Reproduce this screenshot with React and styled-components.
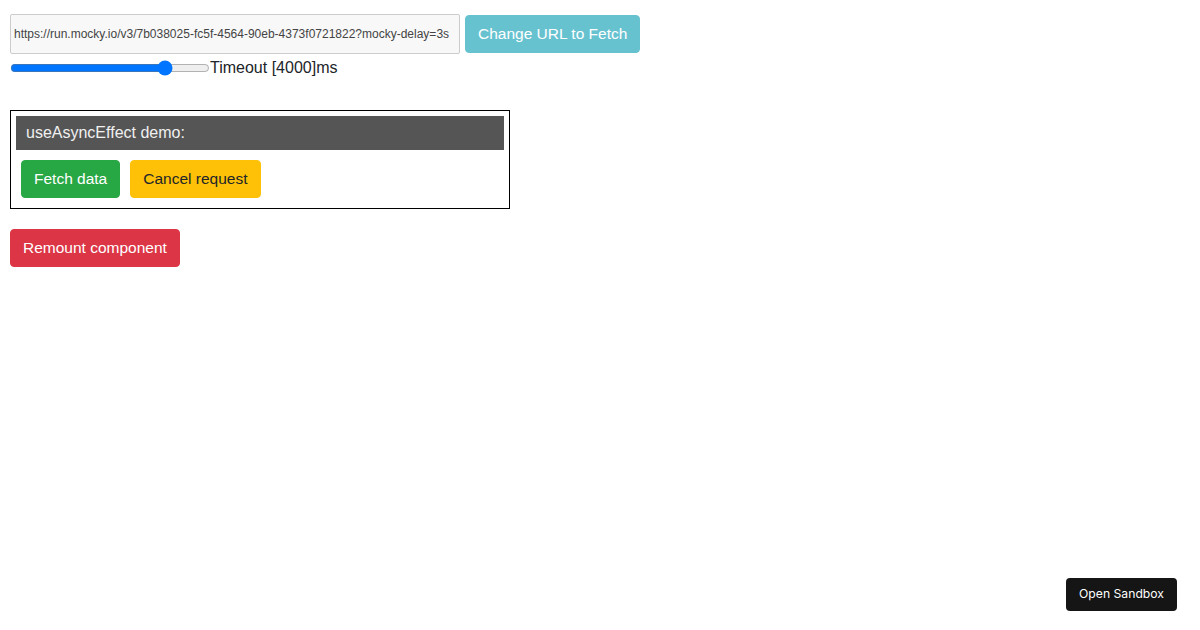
import { useState } from "react";
import styled, { createGlobalStyle } from 'styled-components'

const GlobalStyle = createGlobalStyle`
  body {
    margin: 0;
    background: #fff;
    color: #212529;
    font-family: "Liberation Sans", Arial, sans-serif;
    font-size: 16px;
    line-height: 1.5;
  }
`

const Page = styled.div`
  padding: 14px 10px;
`

const UrlRow = styled.div`
  display: flex;
  align-items: center;
  gap: 5px;
`

const UrlInput = styled.input`
  box-sizing: border-box;
  width: 450px;
  height: 40px;
  padding: 0 3px;
  border: 1px solid #ccc;
  border-radius: 2px;
  background: #f8f8f8;
  color: #444;
  font-family: "Liberation Sans", Arial, sans-serif;
  font-size: 12px;
  outline: none;
`

const Button = styled.button`
  box-sizing: border-box;
  height: 38px;
  padding: 6px 12px;
  border: 1px solid ${p => p.$bg};
  border-radius: 4px;
  background: ${p => p.$bg};
  color: ${p => p.$color || '#fff'};
  font-family: "Liberation Sans", Arial, sans-serif;
  font-size: 15.5px;
  line-height: 1.5;
  cursor: pointer;
  &:disabled {
    opacity: 0.65;
    cursor: default;
  }
`

const SliderRow = styled.div`
  display: flex;
  align-items: center;
  margin-top: 2px;
`

const Slider = styled.input`
  width: 200px;
  margin: 0;
`

const Demo = styled.div`
  box-sizing: border-box;
  width: 500px;
  margin-top: 30px;
  padding: 5px;
  border: 1px solid #000;
`

const DemoHeader = styled.div`
  height: 34px;
  padding: 0 10px;
  display: flex;
  align-items: center;
  background: #555;
  color: #f0f0f0;
`

const ButtonRow = styled.div`
  display: flex;
  gap: 10px;
  padding: 10px 5px 5px;
`

const Remount = styled.div`
  margin-top: 20px;
`

const SandboxLink = styled.a`
  position: fixed;
  right: 23px;
  bottom: 19px;
  box-sizing: border-box;
  height: 33px;
  width: 111px;
  display: flex;
  align-items: center;
  justify-content: center;
  background: #151515;
  color: #fff;
  border-radius: 4px;
  font-family: Inter, "Noto Sans", sans-serif;
  font-size: 12.2px;
  text-decoration: none;
`

const App = () => {
  const [url, setUrl] = useState('https://run.mocky.io/v3/7b038025-fc5f-4564-90eb-4373f0721822?mocky-delay=3s')
  const [timeout, setTimeoutValue] = useState(4000)

  return (
    <Page>
      <GlobalStyle />
      <UrlRow>
        <UrlInput value={url} onChange={e => setUrl(e.target.value)} />
        <Button $bg="#17a2b8" disabled>Change URL to Fetch</Button>
      </UrlRow>
      <SliderRow>
        <Slider
          type="range"
          min="0"
          max="5000"
          value={timeout}
          onChange={e => setTimeoutValue(+e.target.value)}
        />
        <span>Timeout [{timeout}]ms</span>
      </SliderRow>

      <Demo>
        <DemoHeader>useAsyncEffect demo:</DemoHeader>
        <ButtonRow>
          <Button $bg="#28a745">Fetch data</Button>
          <Button $bg="#ffc107" $color="#212529">Cancel request</Button>
        </ButtonRow>
      </Demo>

      <Remount>
        <Button $bg="#dc3545">Remount component</Button>
      </Remount>

      <SandboxLink href="#">Open Sandbox</SandboxLink>
    </Page>
  )
};

export default App;
